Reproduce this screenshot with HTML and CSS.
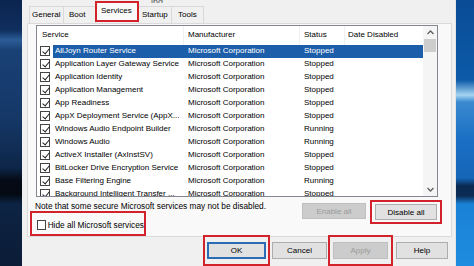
FILE: index.html
```html
<!DOCTYPE html>
<html lang="en">

<head>
  <meta charset="UTF-8">
  <meta name="viewport" content="width=device-width, initial-scale=1.0">
  <title>System Configuration - Services</title>
  <link rel="stylesheet" href="styles.css">
</head>

<body>
  <div class="screen">
    <div class="desktop desktop-left"></div>

    <div class="dialog">
      <div class="title-peek"><span>ing</span></div>

      <div class="tabs">
        <div class="tab">General</div>
        <div class="tab">Boot</div>
        <div class="tab selected">Services</div>
        <div class="tab">Startup</div>
        <div class="tab">Tools</div>
      </div>

      <div class="panel">
        <div class="list">
          <div class="list-body">
            <div class="list-head">
              <div class="col-service">Service</div>
              <div class="col-manuf">Manufacturer</div>
              <div class="col-status">Status</div>
              <div class="col-date">Date Disabled</div>
            </div>

            <div class="row">
              <span class="chk"></span>
              <div class="cells selected"><span>AllJoyn Router Service</span><span>Microsoft Corporation</span><span>Stopped</span><span></span></div>
            </div>
            <div class="row">
              <span class="chk"></span>
              <div class="cells"><span>Application Layer Gateway Service</span><span>Microsoft Corporation</span><span>Stopped</span><span></span></div>
            </div>
            <div class="row">
              <span class="chk"></span>
              <div class="cells"><span>Application Identity</span><span>Microsoft Corporation</span><span>Stopped</span><span></span></div>
            </div>
            <div class="row">
              <span class="chk"></span>
              <div class="cells"><span>Application Management</span><span>Microsoft Corporation</span><span>Stopped</span><span></span></div>
            </div>
            <div class="row">
              <span class="chk"></span>
              <div class="cells"><span>App Readiness</span><span>Microsoft Corporation</span><span>Stopped</span><span></span></div>
            </div>
            <div class="row">
              <span class="chk"></span>
              <div class="cells"><span>AppX Deployment Service (AppX...</span><span>Microsoft Corporation</span><span>Stopped</span><span></span></div>
            </div>
            <div class="row">
              <span class="chk"></span>
              <div class="cells"><span>Windows Audio Endpoint Builder</span><span>Microsoft Corporation</span><span>Running</span><span></span></div>
            </div>
            <div class="row">
              <span class="chk"></span>
              <div class="cells"><span>Windows Audio</span><span>Microsoft Corporation</span><span>Running</span><span></span></div>
            </div>
            <div class="row">
              <span class="chk"></span>
              <div class="cells"><span>ActiveX Installer (AxInstSV)</span><span>Microsoft Corporation</span><span>Stopped</span><span></span></div>
            </div>
            <div class="row">
              <span class="chk"></span>
              <div class="cells"><span>BitLocker Drive Encryption Service</span><span>Microsoft Corporation</span><span>Stopped</span><span></span></div>
            </div>
            <div class="row">
              <span class="chk"></span>
              <div class="cells"><span>Base Filtering Engine</span><span>Microsoft Corporation</span><span>Running</span><span></span></div>
            </div>
            <div class="row">
              <span class="chk"></span>
              <div class="cells"><span>Background Intelligent Transfer ...</span><span>Microsoft Corporation</span><span>Stopped</span><span></span></div>
            </div>
          </div>

          <div class="scrollbar">
            <div class="arrow">
              <svg width="7" height="5" viewBox="0 0 7 5"><polyline points="0.5,4 3.5,1 6.5,4" fill="none" stroke="#606060" stroke-width="1.3"/></svg>
            </div>
            <div class="thumb"></div>
            <div class="track"></div>
            <div class="arrow">
              <svg width="7" height="5" viewBox="0 0 7 5"><polyline points="0.5,1 3.5,4 6.5,1" fill="none" stroke="#606060" stroke-width="1.3"/></svg>
            </div>
          </div>
        </div>

        <div class="panel-foot">
          <div class="foot-left">
            <div class="note">Note that some secure Microsoft services may not be disabled.</div>
            <div class="mark hide-mark">
              <span class="box"></span>
              <span>Hide all Microsoft services</span>
            </div>
          </div>
          <div class="foot-right">
            <button class="btn disabled enable-btn">Enable all</button>
            <div class="mark disable-mark">
              <button class="btn disable-btn">Disable all</button>
            </div>
          </div>
        </div>
      </div>

      <div class="actions">
        <div class="mark ok-mark">
          <button class="btn default">OK</button>
        </div>
        <button class="btn cancel-btn">Cancel</button>
        <div class="mark apply-mark">
          <button class="btn disabled">Apply</button>
        </div>
        <button class="btn help-btn">Help</button>
      </div>
    </div>

    <div class="desktop desktop-right"></div>
  </div>
</body>

</html>
```

FILE: styles.css
```css
body {
  margin: 0;
  font-family: "Liberation Sans", Arial, sans-serif;
  font-size: 8px;
  color: #000;
  overflow: hidden;
}

.screen {
  display: flex;
  width: 474px;
  height: 266px;
  overflow: hidden;
}

.desktop-left {
  width: 22px;
  background: linear-gradient(to bottom,
      #0b2550 0px, #0f2e5e 30px, #2c5d96 40px, #1a4176 50px,
      #143766 120px, #0e2648 168px, #050b16 180px, #040912 194px,
      #0d2444 204px, #0b1c36 266px);
}

.desktop-right {
  width: 18px;
  background: linear-gradient(to bottom,
      #0a4c96 0px, #0c5aa8 80px, #a4d4f2 95px, #3a8ad0 102px,
      #1a6fc4 140px, #1565b8 178px, #0a2a52 186px, #0b2c55 196px,
      #1a82d6 204px, #1e8ce0 266px);
}

.dialog {
  width: 434px;
  background: #f0f0f0;
  border-right: 1px solid #e4e4e4;
  box-sizing: border-box;
  padding-left: 5px;
  display: flex;
  flex-direction: column;
}

/* lower edge of the title bar text, cut by the crop */
.title-peek {
  height: 0;
  padding-left: 124px;
}

.title-peek span {
  display: block;
  width: 20px;
  height: 3px;
  overflow: hidden;
  line-height: 4px;
  font-size: 9px;
  color: #555;
}

/* tabs */
.tabs {
  display: flex;
  align-items: flex-end;
  height: 24px;
  padding-left: 2px;
}

.tab {
  height: 17px;
  line-height: 16px;
  padding-left: 2px;
  border: 1px solid #d9d9d9;
  border-bottom: none;
  margin-right: -1px;
  box-sizing: border-box;
  background: #f0f0f0;
  white-space: nowrap;
}

.tab:nth-child(1) { width: 35px; }
.tab:nth-child(2) { width: 33px; padding-left: 5px; }
.tab:nth-child(4) { width: 34px; padding-left: 3px; }
.tab:nth-child(5) { width: 33px; padding-left: 6px; }

.tab.selected {
  position: relative;
  z-index: 1;
  width: 44px;
  height: 21px;
  line-height: 15px;
  margin-bottom: 1px;
  padding-left: 4px;
  border: 2px solid #d2232a;
  background: #f9f9f9;
}

/* tab page */
.panel {
  width: 425px;
  box-sizing: border-box;
  border: 1px solid #dadada;
  background: #f9f9f9;
  padding: 1px 0 0 2px;
}

.list {
  display: flex;
  width: 402px;
  height: 172px;
  margin-left: 6px;
  box-sizing: border-box;
  border: 1px solid #828790;
  background: #fff;
  overflow: hidden;
}

.list-body {
  width: 386px;
}

.list-head {
  display: grid;
  grid-template-columns: 147px 116px 45px 78px;
  height: 19px;
  line-height: 17px;
}

.list-head div {
  padding-left: 4px;
  border-right: 1px solid #f0f0f0;
}

.list-head .col-service { padding-left: 5px; }
.list-head .col-date { padding-left: 3px; border-right: none; }

.row {
  display: flex;
  height: 13px;
  line-height: 12px;
}

.chk {
  position: relative;
  width: 10px;
  height: 10px;
  margin: 1px 3px 0 3px;
  box-sizing: border-box;
  border: 1px solid #444;
  background: #fff;
}

.chk::after {
  content: "";
  position: absolute;
  left: 2.5px;
  top: 0;
  width: 3px;
  height: 6px;
  border: solid #222;
  border-width: 0 1.2px 1.2px 0;
  transform: rotate(40deg);
}

.cells {
  display: grid;
  grid-template-columns: 131px 116px 45px 78px;
  white-space: nowrap;
}

.cells span {
  padding-left: 4px;
  overflow: hidden;
}

.cells span:first-child { padding-left: 2px; }

.cells.selected {
  background: #1c5ea9;
  color: #fff;
}

.scrollbar {
  width: 14px;
  display: flex;
  flex-direction: column;
  background: #f5f5f5;
}

.arrow {
  height: 13px;
  display: flex;
  align-items: center;
  justify-content: center;
}

.thumb {
  height: 13px;
  margin: 0 1px;
  background: #cdcdcd;
}

.track {
  flex: 1;
}

/* below the list */
.panel-foot {
  display: flex;
  justify-content: space-between;
  padding-right: 9px;
}

.foot-left {
  display: flex;
  flex-direction: column;
}

.note {
  margin: 4px 0 0 5px;
  height: 10px;
  line-height: 10px;
  font-size: 8.3px;
  white-space: nowrap;
}

.mark {
  border: 2px solid #d2232a;
  box-sizing: border-box;
}

.hide-mark {
  display: flex;
  align-items: center;
  width: 116px;
  height: 25px;
  padding: 2px 0 0 5px;
  font-size: 8.3px;
  white-space: nowrap;
}

.box {
  width: 10px;
  height: 10px;
  margin-right: 2px;
  box-sizing: border-box;
  border: 1px solid #444;
  background: #fff;
}

.foot-right {
  display: flex;
  align-items: flex-start;
  padding-top: 3px;
}

.btn {
  font-family: "Liberation Sans", Arial, sans-serif;
  font-size: 8px;
  height: 16px;
  padding: 0;
  box-sizing: border-box;
  border: 1px solid #adadad;
  background: #e1e1e1;
  color: #000;
}

.btn.disabled {
  background: #cccccc;
  border-color: #bfbfbf;
  color: #9a9a9a;
}

.enable-btn {
  width: 64px;
  margin: 3px 4px 0 0;
}

.disable-mark {
  padding: 2px 3px;
}

.disable-btn {
  width: 62px;
}

/* dialog buttons */
.actions {
  display: flex;
  align-items: flex-start;
  margin-top: -2px;
  padding-left: 176px;
}

.ok-mark {
  padding: 5px 2px;
}

.actions .btn {
  width: 55px;
  height: 17px;
}

.actions .btn.default {
  width: 59px;
  border: 2px solid #2b6cb5;
}

.cancel-btn {
  margin: 7px 0 0 2px;
}

.apply-mark {
  margin-left: 1px;
  padding: 5px 3px;
}

.actions .help-btn {
  width: 52px;
  margin: 7px 0 0 3px;
}
```
